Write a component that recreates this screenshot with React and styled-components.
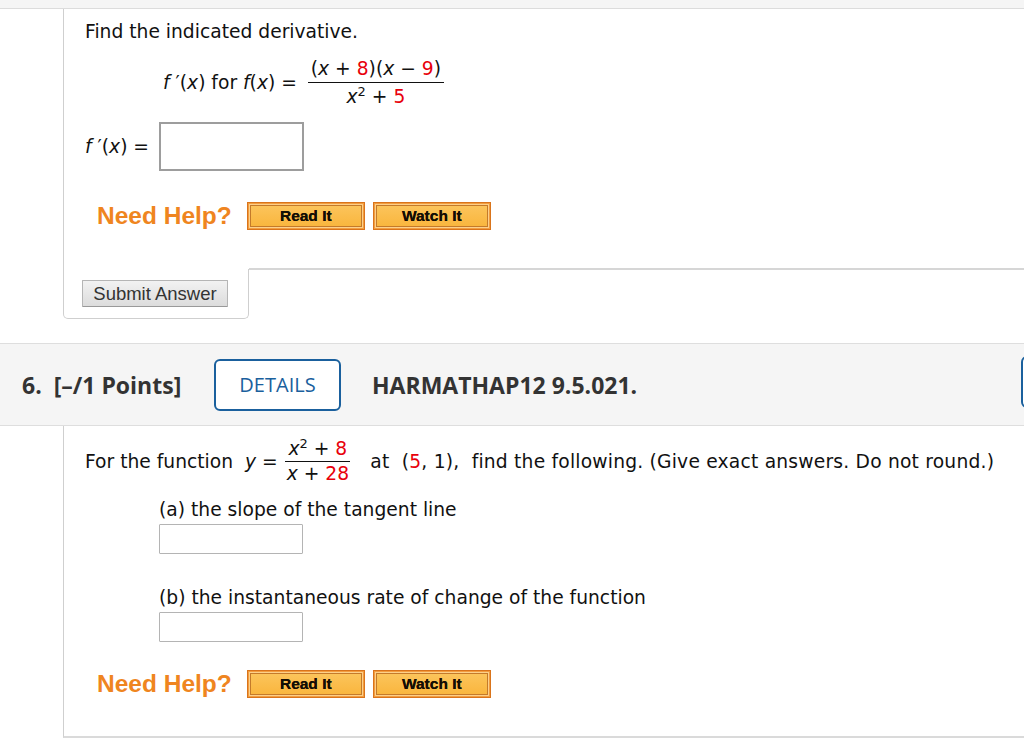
import React from "react";
import styled, { createGlobalStyle } from "styled-components";

const GlobalStyle = createGlobalStyle`
  body {
    margin: 0;
    background: #fff;
    font-family: "DejaVu Sans", "Liberation Sans", sans-serif;
    color: #111;
    overflow-x: hidden;
  }
`;

const TopBand = styled.div`
  height: 8px;
  background: #f5f5f5;
  border-bottom: 1px solid #dcdcdc;
`;

const Card = styled.div`
  margin-left: 63px;
  border-left: 1px solid #cfcfcf;
  ${(p) => p.$closed && "border-bottom: 2px solid #dadada;"}
  padding: ${(p) => p.$pad};
  font-size: 18.7px;
`;

const Prompt = styled.div`
  line-height: 22px;
`;

const MathLine = styled.div`
  display: flex;
  align-items: center;
  margin-left: ${(p) => p.$indent || 0}px;
  margin-top: ${(p) => p.$top || 0}px;
  white-space: pre;
`;

const Frac = styled.span`
  display: inline-flex;
  flex-direction: column;
  align-items: center;
  margin: 0 ${(p) => p.$gap || 4}px;
  line-height: ${(p) => p.$lh || 26}px;
`;

const Num = styled.span`
  border-bottom: 1px solid #111;
  padding: 0 3px;
`;

const Den = styled.span`
  padding: 0 2px;
`;

const V = styled.i``;

const Red = styled.span`
  color: #e8000b;
`;

const Tail = styled.span`
  letter-spacing: 0.2px;
`;

const Sup = styled.sup`
  font-size: 13px;
  line-height: 0;
`;

const BigInput = styled.div`
  width: 141px;
  height: 45px;
  border: 2px solid #9d9d9d;
  margin-left: 10px;
  background: #fff;
`;

const SmallInput = styled.div`
  width: 142px;
  height: 28px;
  border: 1px solid #b4b4b4;
  border-radius: 1px;
  background: #fff;
`;

const HelpRow = styled.div`
  display: flex;
  align-items: center;
  gap: 8px;
  margin-left: 12px;
  margin-top: ${(p) => p.$top}px;
`;

const HelpText = styled.span`
  font-family: "Liberation Sans", Arial, sans-serif;
  font-weight: bold;
  font-size: 24.5px;
  line-height: 28px;
  color: #ef8520;
  margin-right: 7px;
`;

const HelpButton = styled.button`
  width: 118px;
  height: 28px;
  padding: 0;
  font-family: "Liberation Sans", Arial, sans-serif;
  font-weight: bold;
  font-size: 15.5px;
  color: #140e04;
  background: linear-gradient(#fcc65f, #f9b43a);
  border: 1px solid #d9741b;
  box-shadow: inset 0 0 0 1px #f39c3e, inset 0 0 0 2px #fcd08a,
    inset 0 0 0 3px #c47a2a;
  text-shadow: 0 0 0.4px #140e04;
`;

const SubmitRow = styled.div`
  display: flex;
  margin-left: 63px;
`;

const SubmitTab = styled.div`
  width: 166px;
  padding: 11px 0 11px 18px;
  border: 1px solid #cfcfcf;
  border-top: none;
  border-radius: 0 0 5px 5px;
`;

const Filler = styled.div`
  flex: 1;
  border-top: 2px solid #d6d6d6;
  margin-top: -1px;
`;

const SubmitButton = styled.button`
  display: block;
  width: 146px;
  height: 27px;
  padding: 0;
  font-family: "Liberation Sans", Arial, sans-serif;
  font-size: 18.5px;
  line-height: 25px;
  color: #333;
  background: linear-gradient(#f2f2f2, #dcdcdc);
  border: 1px solid #b5b5b5;
  border-bottom-color: #999;
  border-radius: 1px;
`;

const QuestionHeader = styled.div`
  display: flex;
  align-items: center;
  height: 81px;
  margin-top: 24px;
  padding-left: 22px;
  background: #f5f5f5;
  border-top: 1px solid #dedede;
  border-bottom: 1px solid #dedede;
  font-family: "Open Sans", sans-serif;
  font-weight: 700;
  font-size: 23px;
  color: #333;
  overflow: hidden;
`;

const Points = styled.span`
  width: 192px;
  flex: none;
  white-space: pre;
`;

const DetailsButton = styled.button`
  height: 52px;
  width: ${(p) => p.$w || 127}px;
  flex: none;
  padding: 0;
  border: 2px solid #1a609d;
  border-radius: 6px;
  background: #fff;
  color: #1a609d;
  font-family: "Open Sans", sans-serif;
  font-size: 20px;
  font-weight: 400;
`;

const QuestionId = styled.span`
  margin-left: 31px;
  flex: 1;
`;

const EdgeClip = styled.div`
  width: 3px;
  overflow: hidden;
  flex: none;
`;

const Block = styled.div`
  margin-left: ${(p) => p.$indent || 0}px;
  margin-top: ${(p) => p.$top || 0}px;
`;

const Part = styled.div`
  line-height: 22px;
  margin-bottom: 3px;
`;

export default function App() {
  return (
    <>
      <GlobalStyle />
      <TopBand />
      <Card $pad="12px 0 39px 21px">
        <Prompt>Find the indicated derivative.</Prompt>
        <MathLine $indent={78} $top={12}>
          <V>f</V> ′(<V>x</V>) for <V>f</V>(<V>x</V>) ={" "}
          <Frac $gap={5} $lh={27}>
            <Num>
              (<V>x</V> + <Red>8</Red>)(<V>x</V> − <Red>9</Red>)
            </Num>
            <Den>
              <V>x</V>
              <Sup>2</Sup> + <Red>5</Red>
            </Den>
          </Frac>
        </MathLine>
        <MathLine $top={12}>
          <V>f</V> ′(<V>x</V>) =
          <BigInput />
        </MathLine>
        <HelpRow $top={31}>
          <HelpText>Need Help?</HelpText>
          <HelpButton>Read It</HelpButton>
          <HelpButton>Watch It</HelpButton>
        </HelpRow>
      </Card>
      <SubmitRow>
        <SubmitTab>
          <SubmitButton>Submit Answer</SubmitButton>
        </SubmitTab>
        <Filler />
      </SubmitRow>

      <QuestionHeader>
        <Points>6.  [–/1 Points]</Points>
        <DetailsButton>DETAILS</DetailsButton>
        <QuestionId>HARMATHAP12 9.5.021.</QuestionId>
        <EdgeClip>
          <DetailsButton $w={60} />
        </EdgeClip>
      </QuestionHeader>

      <Card $closed $pad="11px 0 38px 21px">
        <MathLine>
          For the function  <V>y</V> =
          <Frac $gap={7} $lh={24}>
            <Num>
              <V>x</V>
              <Sup>2</Sup> + <Red>8</Red>
            </Num>
            <Den>
              <V>x</V> + <Red>28</Red>
            </Den>
          </Frac>
          <Tail>
            {"  at  ("}
            <Red>5</Red>, 1),  find the following. (Give exact answers. Do not round.)
          </Tail>
        </MathLine>
        <Block $indent={74} $top={13}>
          <Part>(a) the slope of the tangent line</Part>
          <SmallInput />
        </Block>
        <Block $indent={74} $top={33}>
          <Part>(b) the instantaneous rate of change of the function</Part>
          <SmallInput />
        </Block>
        <HelpRow $top={28}>
          <HelpText>Need Help?</HelpText>
          <HelpButton>Read It</HelpButton>
          <HelpButton>Watch It</HelpButton>
        </HelpRow>
      </Card>
    </>
  );
}
